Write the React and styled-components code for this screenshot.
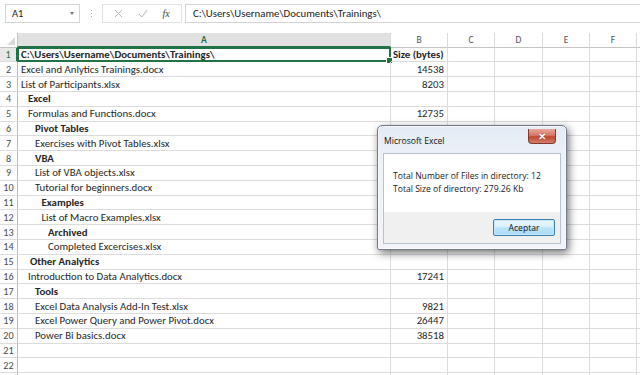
import React from 'react';
import styled, { createGlobalStyle } from 'styled-components';

const Global = createGlobalStyle`
  html, body { margin: 0; padding: 0; background: #fff; }
  body { overflow: hidden; }
  * { box-sizing: border-box; }
`;

const Page = styled.div`
  position: relative;
  width: 640px;
  height: 375px;
  overflow: hidden;
  background: #fff;
  font-family: Carlito, Lato, "Liberation Sans", sans-serif;
`;

/* ---------- formula bar ---------- */
const Toolbar = styled.div`
  display: flex;
  align-items: center;
  height: 33px;
  padding: 0 0 6px 5px;
`;

const NameBox = styled.div`
  display: flex;
  align-items: center;
  justify-content: space-between;
  width: 75px;
  height: 19px;
  border: 1px solid #d4d4d4;
  padding: 0 5px 0 6px;
  font-size: 10.5px;
  color: #222;
`;

const Caret = styled.span`
  width: 0;
  height: 0;
  border-left: 2.5px solid transparent;
  border-right: 2.5px solid transparent;
  border-top: 3px solid #777;
`;

const Grip = styled.div`
  width: 22px;
  display: flex;
  flex-direction: column;
  align-items: center;
  gap: 2px;
  span { width: 1px; height: 1px; background: #aaa; }
`;

const FxBox = styled.div`
  display: flex;
  align-items: center;
  justify-content: space-around;
  width: 80px;
  height: 19px;
  border: 1px solid #e2e2e2;
  padding: 0 4px;
`;

const FxText = styled.span`
  font-family: "Liberation Serif", serif;
  font-style: italic;
  font-size: 10px;
  color: #444;
`;

const FormulaInput = styled.div`
  flex: 1;
  height: 19px;
  margin-left: 3px;
  border: 1px solid #d4d4d4;
  border-right: none;
  display: flex;
  align-items: center;
  padding-left: 7px;
  font-size: 10.8px;
  color: #222;
`;

/* ---------- grid ---------- */
const Sheet = styled.div`
  display: grid;
  grid-template-columns: 18px 373px 57px 47px 48px 47px 47px 1fr;
  grid-template-rows: 14.6px repeat(23, 14.8px);
`;

const Corner = styled.div`
  position: relative;
  border-right: 1px solid #c4c4c4;
  border-bottom: 1px solid #c4c4c4;
  &::after {
    content: '';
    position: absolute;
    right: 2px;
    bottom: 2px;
    width: 0;
    height: 0;
    border-left: 8px solid transparent;
    border-bottom: 8px solid #dadada;
  }
`;

const ColHead = styled.div`
  display: flex;
  align-items: center;
  justify-content: center;
  padding-top: 1px;
  font-size: 9.5px;
  color: ${p => (p.$active ? '#217346' : '#555')};
  font-weight: ${p => (p.$active ? 700 : 400)};
  background: ${p => (p.$active ? '#e1e1e1' : '#fff')};
  border-right: 1px solid #dadada;
  border-bottom: ${p => (p.$active ? '2px solid #217346' : '1px solid #c4c4c4')};
`;

const RowHead = styled.div`
  display: flex;
  align-items: center;
  justify-content: center;
  font-size: 10.2px;
  color: ${p => (p.$active ? '#217346' : '#4a4a4a')};
  background: ${p => (p.$active ? '#e8e8e8' : '#fff')};
  border-right: ${p => (p.$active ? '2px solid #217346' : '1px solid #b9b9b9')};
  border-bottom: 1px solid #dcdcdc;
`;

const Cell = styled.div`
  position: relative;
  display: flex;
  align-items: center;
  justify-content: ${p => (p.$right ? 'flex-end' : 'flex-start')};
  padding-left: ${p => (p.$indent != null ? p.$indent : 3)}px;
  padding-right: 3px;
  font-size: 10.8px;
  font-weight: ${p => (p.$bold ? 700 : 400)};
  color: #262626;
  white-space: nowrap;
  border-right: 1px solid #dcdcdc;
  border-bottom: 1px solid #dcdcdc;
`;

const Selection = styled.div`
  position: absolute;
  left: -1px;
  top: -1px;
  right: -1px;
  bottom: -1px;
  border: 2px solid #217346;
  pointer-events: none;
  &::after {
    content: '';
    position: absolute;
    right: -4px;
    bottom: -4px;
    width: 5px;
    height: 5px;
    background: #217346;
    border: 1px solid #fff;
  }
`;

/* ---------- dialog ---------- */
const Dialog = styled.div`
  position: absolute;
  left: 377px;
  top: 125px;
  width: 190px;
  height: 125px;
  display: flex;
  flex-direction: column;
  padding: 0 5px 5px 5px;
  background: linear-gradient(#e3ebf4, #eef2f7 30%, #f1f3f7);
  border: 1px solid #6e7a89;
  border-radius: 5px 5px 2px 2px;
  box-shadow: 2px 3px 8px rgba(0, 0, 0, 0.55), inset 0 0 0 1px rgba(255,255,255,0.7);
  font-family: "Open Sans", "Noto Sans", sans-serif;
`;

const TitleBar = styled.div`
  position: relative;
  height: 27px;
  display: flex;
  align-items: center;
  padding: 3px 0 0 1px;
  font-size: 8.6px;
  color: #111;
`;

const CloseBtn = styled.div`
  position: absolute;
  right: 5px;
  top: 3px;
  width: 28px;
  height: 15px;
  display: flex;
  align-items: center;
  justify-content: center;
  border: 1px solid #7c3a33;
  border-top: none;
  border-radius: 0 0 4px 4px;
  background: linear-gradient(#e8a99c, #d2705f 50%, #c0452f 55%, #d3806b);
  color: #fff;
  font-family: "Liberation Sans", sans-serif;
  font-weight: 700;
  font-size: 10px;
  text-shadow: 0 0 1px #5a1a10;
`;

const Client = styled.div`
  flex: 1;
  display: flex;
  flex-direction: column;
  border: 1px solid #b9c3cf;
  background: #f0f0f0;
`;

const Message = styled.div`
  height: 58px;
  background: #fff;
  padding: 16px 0 0 9px;
  font-size: 8.6px;
  line-height: 13px;
  color: #1a1a1a;
`;

const ButtonRow = styled.div`
  flex: 1;
  display: flex;
  justify-content: flex-end;
  align-items: center;
  padding-right: 5px;
`;

const Button = styled.div`
  width: 62px;
  height: 17px;
  display: flex;
  align-items: center;
  justify-content: center;
  border: 1px solid #3c7fb1;
  border-radius: 2px;
  background: linear-gradient(#eaf6fd, #d9f0fc 50%, #bee6fd 50%, #a7d9f5);
  box-shadow: inset 0 0 0 1px #c8e9fb;
  font-size: 8.6px;
  color: #111;
`;

const rows = [
  { a: 'C:\\Users\\Username\\Documents\\Trainings\\', bold: true, b: 'Size (bytes)', bBold: true },
  { a: 'Excel and Anlytics Trainings.docx', b: '14538' },
  { a: 'List of Participants.xlsx', b: '8203' },
  { a: 'Excel', bold: true, ind: 10 },
  { a: 'Formulas and Functions.docx', ind: 10, b: '12735' },
  { a: 'Pivot Tables', bold: true, ind: 17 },
  { a: 'Exercises with Pivot Tables.xlsx', ind: 17 },
  { a: 'VBA', bold: true, ind: 17 },
  { a: 'List of VBA objects.xlsx', ind: 17 },
  { a: 'Tutorial for beginners.docx', ind: 17 },
  { a: 'Examples', bold: true, ind: 23.5 },
  { a: 'List of Macro Examples.xlsx', ind: 23.5 },
  { a: 'Archived', bold: true, ind: 30 },
  { a: 'Completed Excercises.xlsx', ind: 30 },
  { a: 'Other Analytics', bold: true, ind: 12 },
  { a: 'Introduction to Data Analytics.docx', ind: 10, b: '17241' },
  { a: 'Tools', bold: true, ind: 17 },
  { a: 'Excel Data Analysis Add-In Test.xlsx', ind: 17, b: '9821' },
  { a: 'Excel Power Query and Power Pivot.docx', ind: 17, b: '26447' },
  { a: 'Power Bi basics.docx', ind: 17, b: '38518' },
  {}, {}, { hideNum: true },
];

const extraCols = ['C', 'D', 'E', 'F', ''];

export default function App() {
  return (
    <Page>
      <Global />
      <Toolbar>
        <NameBox>
          <span>A1</span>
          <Caret />
        </NameBox>
        <Grip><span /><span /><span /></Grip>
        <FxBox>
          <svg width="9" height="9" viewBox="0 0 9 9">
            <path d="M1 1 L8 8 M8 1 L1 8" stroke="#b5b5b5" strokeWidth="1" />
          </svg>
          <svg width="10" height="9" viewBox="0 0 10 9">
            <path d="M1 5 L3.8 8 L9 1" stroke="#b5b5b5" strokeWidth="1" fill="none" />
          </svg>
          <FxText>fx</FxText>
        </FxBox>
        <FormulaInput>C:\Users\Username\Documents\Trainings\</FormulaInput>
      </Toolbar>

      <Sheet>
        <Corner />
        <ColHead $active>A</ColHead>
        <ColHead>B</ColHead>
        {extraCols.map((c, i) => (
          <ColHead key={i}>{c}</ColHead>
        ))}

        {rows.map((r, i) => (
          <React.Fragment key={i}>
            <RowHead $active={i === 0}>{r.hideNum ? '' : i + 1}</RowHead>
            <Cell $bold={r.bold} $indent={r.ind}>
              {r.a}
              {i === 0 && <Selection />}
            </Cell>
            <Cell $bold={r.bBold} $right={!r.bBold} $indent={2}>
              {r.b}
            </Cell>
            {extraCols.map((c, j) => (
              <Cell key={j} />
            ))}
          </React.Fragment>
        ))}
      </Sheet>

      <Dialog>
        <TitleBar>
          Microsoft Excel
          <CloseBtn>✕</CloseBtn>
        </TitleBar>
        <Client>
          <Message>
            Total Number of Files in directory: 12
            <br />
            Total Size of directory: 279.26 Kb
          </Message>
          <ButtonRow>
            <Button>Aceptar</Button>
          </ButtonRow>
        </Client>
      </Dialog>
    </Page>
  );
}
